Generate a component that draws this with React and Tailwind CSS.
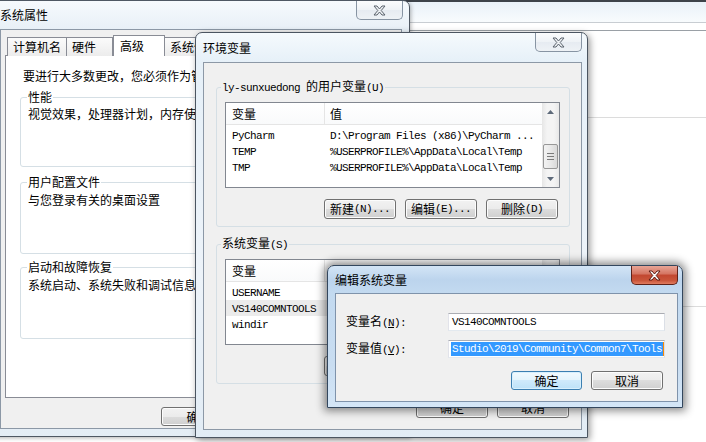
import React from 'react';

const mono = "font-['Liberation_Mono',monospace] text-[11px] tracking-[-0.6px]";

function M({ children, className = '' }) {
  return <span className={`${mono} ${className}`}>{children}</span>;
}

function CloseX({ active }) {
  return (
    <svg width="13" height="11" viewBox="0 0 13 11">
      <path
        d="M1 1H4L6.5 4L9 1H12L8.2 5.5L12 10H9L6.5 7L4 10H1L4.8 5.5Z"
        fill={active ? '#ffffff' : '#eef1f4'}
        stroke={active ? '#5c1a12' : '#5b636d'}
        strokeWidth="1"
        strokeLinejoin="round"
      />
    </svg>
  );
}

function CloseBtn({ active, className = '' }) {
  return (
    <div
      className={`absolute top-0 flex h-[19px] w-[47px] items-center justify-center rounded-b-[5px] border border-t-0 ${
        active
          ? 'border-[#5e2219] bg-[linear-gradient(#e8a596,#d47360_45%,#c24730_50%,#c9553a_80%,#e07b5f)]'
          : 'border-[#8794a3] bg-[linear-gradient(#fbfcfd,#eef2f6_50%,#e6ebf1_50%,#eef2f6)]'
      } ${className}`}
    >
      <CloseX active={active} />
    </div>
  );
}

function Btn({ children, className = '', def }) {
  return (
    <div
      className={`flex items-center justify-center rounded-[3px] border ${
        def
          ? 'border-[#3c7fb1] bg-[linear-gradient(#f2fafe,#e3f4fc_50%,#cfeafb_50%,#bde2f8)] shadow-[inset_0_0_0_1px_#d8f0fd]'
          : 'border-[#707070] bg-[linear-gradient(#f2f2f2,#ebebeb_50%,#dddddd_50%,#cfcfcf)] shadow-[inset_0_0_0_1px_#fcfcfc]'
      } ${className}`}
    >
      {children}
    </div>
  );
}

function Arrow({ up }) {
  return (
    <svg width="7" height="4" viewBox="0 0 7 4">
      <path d={up ? 'M0 4L3.5 0L7 4Z' : 'M0 0L3.5 4L7 0Z'} fill="#5e6a7a" />
    </svg>
  );
}

function Scrollbar() {
  return (
    <div className="flex w-[17px] flex-col bg-[linear-gradient(90deg,#e6e6e6,#f4f4f4_30%,#f4f4f4_70%,#e8e8e8)]">
      <div className="flex h-[17px] items-center justify-center">
        <Arrow up />
      </div>
      <div className="flex flex-1 flex-col justify-end pb-[1px]">
        <div className="mx-[1px] flex h-[25px] flex-col items-center justify-center gap-[2px] rounded-[2px] border border-[#979797] bg-[linear-gradient(90deg,#f3f3f3,#e8e8e8_50%,#d9d9d9)]">
          <div className="h-px w-[7px] bg-[#7a7a7a]" />
          <div className="h-px w-[7px] bg-[#7a7a7a]" />
          <div className="h-px w-[7px] bg-[#7a7a7a]" />
        </div>
      </div>
      <div className="flex h-[17px] items-center justify-center">
        <Arrow />
      </div>
    </div>
  );
}

function ListView({ rows, scroll, selected }) {
  return (
    <div className="ml-[4px] flex h-[86px] w-[335px] border border-[#828790] bg-white">
      <div className="flex-1 overflow-hidden">
        <div className="flex h-[22px] items-center border-b border-[#e5e5e5] bg-[linear-gradient(#ffffff,#f9fafb)]">
          <div className="flex h-full w-[99px] items-center border-r border-[#e5e5e5] pl-[6px]">变量</div>
          <div className="pl-[5px]">值</div>
        </div>
        <div className="pt-[2px]">
          {rows.map(([k, v], i) => (
            <div key={k} className={`flex h-[16px] items-center whitespace-nowrap ${selected === i ? 'bg-[#ebebeb]' : ''}`}>
              <div className="w-[99px] pl-[6px]">
                <M>{k}</M>
              </div>
              <div className="pl-[5px]">
                <M>{v}</M>
              </div>
            </div>
          ))}
        </div>
      </div>
      {scroll && <Scrollbar />}
    </div>
  );
}

function Group({ label, className = '', children }) {
  return (
    <fieldset className={`rounded-[3px] border border-[#d5dfe5] ${className}`}>
      <legend className="px-[1px] leading-[14px] whitespace-nowrap">{label}</legend>
      {children}
    </fieldset>
  );
}

const userVars = [
  ['PyCharm', 'D:\\Program Files (x86)\\PyCharm ...'],
  ['TEMP', '%USERPROFILE%\\AppData\\Local\\Temp'],
  ['TMP', '%USERPROFILE%\\AppData\\Local\\Temp'],
];

const sysVars = [
  ['USERNAME', ''],
  ['VS140COMNTOOLS', ''],
  ['windir', ''],
];

export default function App() {
  return (
    <div className="relative h-[442px] w-[706px] overflow-hidden bg-white font-['Noto_Sans_CJK_SC','Noto_Sans',sans-serif] text-[12px] leading-[14px] text-black">
      {/* desktop behind */}
      <div className="h-[2px] bg-[#3d434a]" />
      <div className="h-[21px] border-b border-[#c8cdd2] bg-[linear-gradient(#e9f1f9,#f8fbfd)]" />
      <div className="h-[8px] border-b border-[#9aa0a6]" />
      <div className="h-[87px] border-b border-[#dcdcdc]" />
      <div className="h-[189px] border-b border-[#dcdcdc]" />

      {/* 系统属性 */}
      <div className="absolute left-[-8px] top-0 z-[1] h-[437px] w-[418px] rounded-t-[7px] border border-[#4f5863] bg-[linear-gradient(180deg,#f6fafd,#e8f0f7_28px,#eef4f9_60%,#e4edf5)] pl-[7px] pr-[7px] shadow-[1px_1px_4px_rgba(0,0,0,0.3)]">
        <div className="flex h-[28px] items-center">系统属性</div>
        <CloseBtn className="right-[6px]" />
        <div className="h-[400px] w-[402px] border border-[#8c98a6] bg-[#f0f0f0]">
          <div className="relative z-10 flex h-[26px] items-end pl-[6px]">
            <div className="flex h-[19px] w-[60px] items-center border border-b-0 border-[#898c95] bg-[linear-gradient(#fbfbfb,#ececec)] pl-[5px]">计算机名</div>
            <div className="flex h-[19px] w-[46px] items-center border border-b-0 border-l-0 border-[#898c95] bg-[linear-gradient(#fbfbfb,#ececec)] pl-[5px]">硬件</div>
            <div className="flex h-[21px] w-[52px] items-start border border-b-0 border-[#898c95] bg-white pl-[6px] pt-[3px]">高级</div>
            <div className="flex h-[19px] w-[70px] items-center border border-b-0 border-l-0 border-[#898c95] bg-[linear-gradient(#fbfbfb,#ececec)] pl-[5px]">系统保护</div>
          </div>
          <div className="-mt-px ml-[4px] h-[343px] w-[392px] overflow-hidden border border-[#898c95] bg-white">
            <div className="mt-[13px] whitespace-nowrap pl-[17px]">要进行大多数更改，您必须作为管理员登录。</div>
            <Group label="性能" className="ml-[14px] mt-[7px] h-[77px] w-[365px] pl-[6px]">
              <div className="mt-[3px] whitespace-nowrap pl-px">视觉效果，处理器计划，内存使用，以及虚拟内存</div>
            </Group>
            <Group label="用户配置文件" className="ml-[14px] mt-[8px] h-[79px] w-[365px] pl-[6px]">
              <div className="mt-[4px] whitespace-nowrap pl-px">与您登录有关的桌面设置</div>
            </Group>
            <Group label="启动和故障恢复" className="ml-[14px] mt-[6px] h-[79px] w-[365px] pl-[6px]">
              <div className="mt-[4px] whitespace-nowrap pl-px">系统启动、系统失败和调试信息</div>
            </Group>
          </div>
          <Btn className="ml-[160px] mt-[9px] h-[19px] w-[75px]">确定</Btn>
        </div>
      </div>

      {/* 环境变量 */}
      <div className="absolute left-[195px] top-[32px] z-[2] h-[406px] w-[393px] rounded-t-[7px] border border-[#4b5561] bg-[linear-gradient(180deg,#f5fafd,#e6f0f8_29px,#edf3f9_60%,#e2ecf5)] pl-[7px] pr-[5px] shadow-[2px_2px_7px_rgba(0,0,0,0.4)]">
        <div className="flex h-[29px] items-center">环境变量</div>
        <CloseBtn className="right-[5px]" />
        <div className="flex h-[368px] flex-col border border-[#8c98a6] bg-[#f0f0f0]">
          <Group
            label={
              <>
                <M>ly-sunxuedong </M>的用户变量<M>(U)</M>
              </>
            }
            className="ml-[12px] mt-[16px] h-[148px] w-[354px] pl-[4px]"
          >
            <div className="mt-[7px]">
              <ListView rows={userVars} scroll />
            </div>
            <div className="mt-[11px] flex justify-end gap-[9px] pr-[11px]">
              <Btn className="h-[20px] w-[72px]">
                新建<M>(N)...</M>
              </Btn>
              <Btn className="h-[20px] w-[72px]">
                编辑<M>(E)...</M>
              </Btn>
              <Btn className="h-[20px] w-[72px]">
                删除<M>(D)</M>
              </Btn>
            </div>
          </Group>
          <Group
            label={
              <>
                系统变量<M>(S)</M>
              </>
            }
            className="ml-[12px] mt-[9px] h-[148px] w-[354px] pl-[4px]"
          >
            <div className="mt-[7px]">
              <ListView rows={sysVars} selected={1} scroll />
            </div>
            <div className="mt-[11px] flex justify-end gap-[9px] pr-[11px]">
              <Btn className="h-[20px] w-[72px]" />
              <Btn className="h-[20px] w-[72px]" />
              <Btn className="h-[20px] w-[72px]" />
            </div>
          </Group>
          <div className="mt-[14px] flex justify-end gap-[9px] pr-[12px]">
            <Btn className="h-[20px] w-[72px]">确定</Btn>
            <Btn className="h-[20px] w-[72px]">取消</Btn>
          </div>
        </div>
      </div>

      {/* 编辑系统变量 */}
      <div className="absolute left-[327px] top-[265px] z-[3] h-[143px] w-[356px] rounded-t-[7px] border border-[#33475e] bg-[linear-gradient(180deg,#d3e5f6,#bcd4ed_14px,#c3daf0_27px,#c9ddf1_70%,#d4e6f7)] pl-[7px] pr-[4px] shadow-[0_0_9px_3px_rgba(0,0,0,0.45)]">
        <div className="flex h-[27px] items-center">编辑系统变量</div>
        <CloseBtn active className="right-[4px]" />
        <div className="h-[109px] border border-[#7f93ab] bg-[#f0f0f0]">
          <div className="mt-[19px] flex h-[18px] items-center">
            <div className="w-[112px] pl-[10px]">
              变量名<M>(<span className="underline">N</span>):</M>
            </div>
            <div className="flex h-[18px] w-[217px] items-center border border-[#abadb3] border-b-[#e3e9ef] border-l-[#e2e3ea] border-r-[#dbdfe6] bg-white pl-[3px]">
              <M>VS140COMNTOOLS</M>
            </div>
          </div>
          <div className="mt-[9px] flex h-[18px] items-center">
            <div className="w-[112px] pl-[10px]">
              变量值<M>(<span className="underline">V</span>):</M>
            </div>
            <div className="flex h-[18px] w-[217px] items-center overflow-hidden border border-[#abadb3] border-b-[#e3e9ef] border-l-[#e2e3ea] border-r-[#dbdfe6] bg-white pl-[2px]">
              <div className="flex h-[14px] items-center whitespace-nowrap bg-[#3399ff] pl-px pr-px text-white">
                <M>Studio\2019\Community\Common7\Tools</M>
              </div>
              <div className="h-[14px] w-px bg-[#ff8a00]" />
            </div>
          </div>
          <div className="mt-[13px] flex justify-end gap-[9px] pr-[14px]">
            <Btn def className="h-[19px] w-[71px]">确定</Btn>
            <Btn className="h-[19px] w-[72px]">取消</Btn>
          </div>
        </div>
      </div>
    </div>
  );
}
